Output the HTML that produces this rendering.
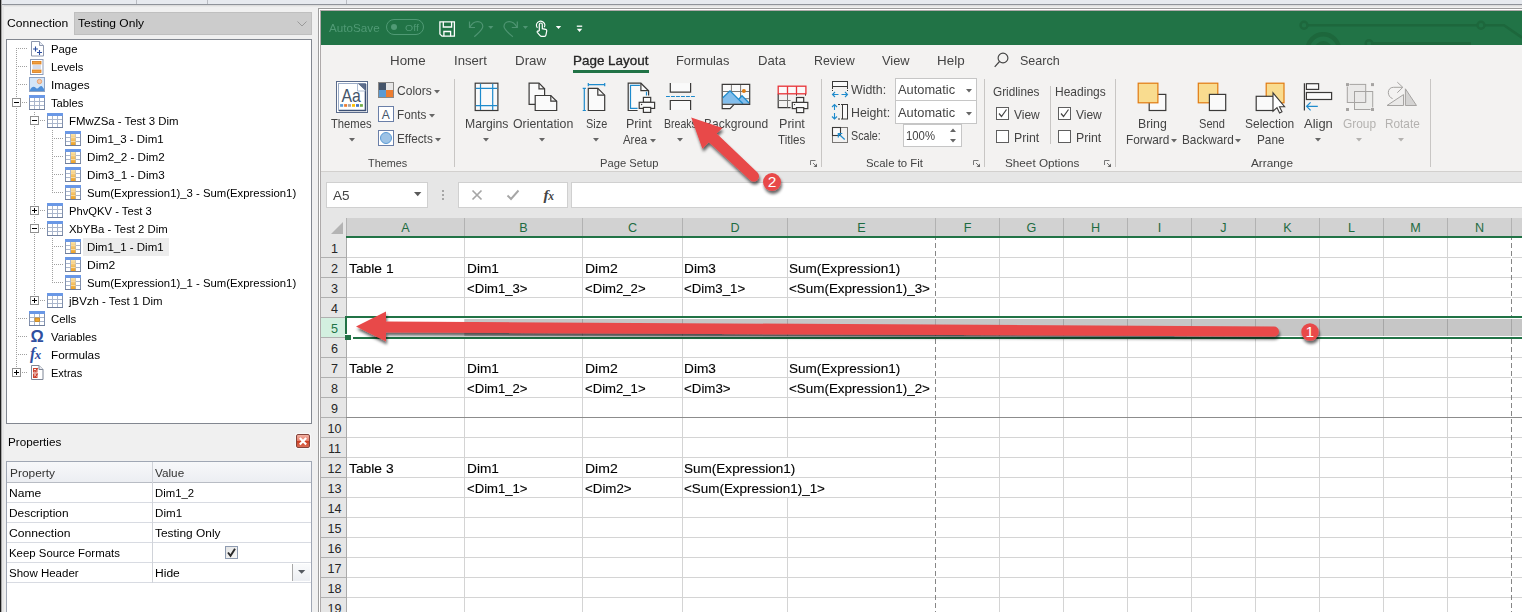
<!DOCTYPE html>
<html><head><meta charset="utf-8"><title>Excel Page Layout</title>
<style>
*{box-sizing:border-box;margin:0;padding:0}
html,body{width:1522px;height:612px;overflow:hidden;background:#f0f0f0}
body{position:relative;font-family:"Liberation Sans",sans-serif;font-size:12px;color:#000}
.a{position:absolute}
.t{position:absolute;white-space:nowrap;line-height:1}
.ui{font-size:12px;letter-spacing:-0.19px;color:#000}
.rb{font-size:12.2px;color:#444;letter-spacing:-0.15px}
.cell{font-size:13.2px;color:#000;letter-spacing:-0.2px}
.hd{font-size:12.6px;color:#1e6b41;text-align:center}
.rn{font-size:12.6px;color:#262626;text-align:center;width:24px}
svg{position:absolute;overflow:visible}
</style></head><body>

<div class="a" style="left:0;top:0;width:1522px;height:4px;background:#e7eaef"></div>
<div class="a" style="left:0;top:4px;width:1522px;height:1px;background:#8f939a"></div>
<div class="a" style="left:0;top:5px;width:1522px;height:1px;background:#dcdcdc"></div><div class="a" style="left:0;top:6px;width:1522px;height:1px;background:#e8e8e8"></div>
<div class="a" style="left:136px;top:0;width:1px;height:4px;background:#b9bcc2"></div>
<div class="a" style="left:207px;top:0;width:1px;height:4px;background:#b9bcc2"></div>
<div class="a" style="left:346px;top:0;width:1px;height:4px;background:#b9bcc2"></div>
<div class="a" style="left:0;top:7px;width:318px;height:605px;background:#f0f0f0"></div>
<div class="a" style="left:0;top:0;width:1px;height:612px;background:#1c1c1c"></div><div class="a" style="left:1px;top:0;width:1px;height:612px;background:#a8a8a8"></div><div class="a" style="left:2px;top:5px;width:2px;height:607px;background:#e6e6e6"></div>
<div class="t" style="left:7.4px;top:17.1px;font-size:11.70px;color:#000;transform-origin:0 50%;transform:scaleX(1.037);">Connection</div>
<div class="a" style="left:74px;top:12px;width:238px;height:23px;background:#cccccc;border:1px solid #bfbfbf"></div>
<div class="t" style="left:78.1px;top:17.4px;font-size:11.70px;color:#000;transform-origin:0 50%;transform:scaleX(1.027);">Testing Only</div>
<svg style="left:297px;top:21px" width="10" height="6"><path d="M0.5 0.5 L5 5 L9.5 0.5" fill="none" stroke="#9a9a9a" stroke-width="1"/></svg>
<div class="a" style="left:6px;top:39px;width:306px;height:385px;background:#fff;border:1px solid #828790"></div>
<div class="a" style="left:16px;top:48px;width:1px;height:320px;background:repeating-linear-gradient(180deg,#a0a0a0 0 1px,transparent 1px 2px)"></div>
<div class="a" style="left:34px;top:112px;width:1px;height:184px;background:repeating-linear-gradient(180deg,#a0a0a0 0 1px,transparent 1px 2px)"></div>
<div class="a" style="left:52px;top:130px;width:1px;height:63px;background:repeating-linear-gradient(180deg,#a0a0a0 0 1px,transparent 1px 2px)"></div>
<div class="a" style="left:52px;top:238px;width:1px;height:45px;background:repeating-linear-gradient(180deg,#a0a0a0 0 1px,transparent 1px 2px)"></div>
<svg style="left:29px;top:41px" width="16" height="16"><path d="M2.500 0.500 H10.500 L14.500 4.500 V15 H2.500 Z" fill="#fff" stroke="#8d97ad"/><path d="M10.500 0.500 V4.500 H14.500" fill="#e9edf5" stroke="#8d97ad"/><path d="M6.500 5.500v5M4 8h5M10.500 9v5M8 11.500h5" stroke="#2b4ea0" stroke-width="1.100"/></svg>
<div class="t" style="left:50.9px;top:42.8px;font-size:11.70px;color:#000;transform-origin:0 50%;transform:scaleX(0.970);">Page</div>
<div class="a" style="left:18px;top:48px;width:10px;height:1px;background:repeating-linear-gradient(90deg,#a0a0a0 0 1px,transparent 1px 2px)"></div>
<svg style="left:29px;top:59px" width="16" height="16"><rect x="1.500" y="0.500" width="12.500" height="15" fill="#fff" stroke="#8d9cb8"/><rect x="3.500" y="2.500" width="8.500" height="2.500" fill="#f0a040" stroke="#d97a1a" stroke-width="0.800"/><rect x="3.500" y="11" width="8.500" height="2.500" fill="#f0a040" stroke="#d97a1a" stroke-width="0.800"/><path d="M3.500 7h8.500M3.500 9h8.500" stroke="#a9b9d9" stroke-width="1"/></svg>
<div class="t" style="left:50.9px;top:60.8px;font-size:11.70px;color:#000;transform-origin:0 50%;transform:scaleX(0.961);">Levels</div>
<div class="a" style="left:18px;top:66px;width:10px;height:1px;background:repeating-linear-gradient(90deg,#a0a0a0 0 1px,transparent 1px 2px)"></div>
<svg style="left:29px;top:77px" width="16" height="16"><rect x="0.5" y="0.5" width="15" height="14" fill="#d5e6f8" stroke="#8ea3c4"/><path d="M1 13 C3 9 5 9 7 11 C9 13 10 9 12 9 C13.500 9 14 11 15 12 V14 H1Z" fill="#4f8fd8"/><circle cx="10.500" cy="4.500" r="2.200" fill="#f6c9a8" stroke="#e8955a" stroke-width="0.8"/></svg>
<div class="t" style="left:50.9px;top:78.8px;font-size:11.70px;color:#000;transform-origin:0 50%;transform:scaleX(1.006);">Images</div>
<div class="a" style="left:18px;top:84px;width:10px;height:1px;background:repeating-linear-gradient(90deg,#a0a0a0 0 1px,transparent 1px 2px)"></div>
<svg style="left:29px;top:95px" width="16" height="16"><rect x="0.5" y="0.5" width="15" height="14" fill="#fff" stroke="#8291ad"/><rect x="0" y="0" width="16" height="3" fill="#6a98e6"/><path d="M1 6.500h14M1 10.500h14M5.500 3v11M10.500 3v11" stroke="#aab6cc" stroke-width="1"/><path d="M0 14.500h16" stroke="#6f7e9c" stroke-width="1"/></svg>
<div class="t" style="left:50.9px;top:96.8px;font-size:11.70px;color:#000;transform-origin:0 50%;transform:scaleX(0.961);">Tables</div>
<div class="a" style="left:22px;top:102px;width:6px;height:1px;background:repeating-linear-gradient(90deg,#a0a0a0 0 1px,transparent 1px 2px)"></div>
<div class="a" style="left:12px;top:98px;width:9px;height:9px;background:#fff;border:1px solid #919191"></div><div class="a" style="left:14px;top:102px;width:5px;height:1px;background:#000"></div>
<svg style="left:47px;top:113px" width="16" height="16"><rect x="0.5" y="0.5" width="15" height="14" fill="#fff" stroke="#8291ad"/><rect x="0" y="0" width="16" height="3" fill="#6a98e6"/><path d="M1 6.500h14M1 10.500h14M5.500 3v11M10.500 3v11" stroke="#aab6cc" stroke-width="1"/><path d="M0 14.500h16" stroke="#6f7e9c" stroke-width="1"/></svg>
<div class="t" style="left:69.3px;top:114.8px;font-size:11.70px;color:#000;transform-origin:0 50%;transform:scaleX(0.976);">FMwZSa - Test 3 Dim</div>
<div class="a" style="left:40px;top:120px;width:6px;height:1px;background:repeating-linear-gradient(90deg,#a0a0a0 0 1px,transparent 1px 2px)"></div>
<div class="a" style="left:30px;top:116px;width:9px;height:9px;background:#fff;border:1px solid #919191"></div><div class="a" style="left:32px;top:120px;width:5px;height:1px;background:#000"></div>
<svg style="left:65px;top:131px" width="16" height="16"><rect x="0.5" y="0.5" width="15" height="14" fill="#fff" stroke="#8291ad"/><rect x="0" y="0" width="16" height="3" fill="#6a98e6"/><path d="M1 6.500h14M1 10.500h14M5.500 3v11M10.500 3v11" stroke="#aab6cc" stroke-width="1"/><path d="M0 14.500h16" stroke="#6f7e9c" stroke-width="1"/><defs><linearGradient id="og" x1="0" y1="0" x2="0" y2="1"><stop offset="0" stop-color="#fbe3a8"/><stop offset="1" stop-color="#eda024"/></linearGradient></defs><rect x="6" y="3" width="4.500" height="11" fill="url(#og)"/><path d="M6 6.500h4.500M6 10.500h4.500" stroke="#f6d9a0" stroke-width="1"/></svg>
<div class="t" style="left:87.2px;top:132.8px;font-size:11.70px;color:#000;transform-origin:0 50%;transform:scaleX(0.983);">Dim1_3 - Dim1</div>
<div class="a" style="left:54px;top:138px;width:10px;height:1px;background:repeating-linear-gradient(90deg,#a0a0a0 0 1px,transparent 1px 2px)"></div>
<svg style="left:65px;top:149px" width="16" height="16"><rect x="0.5" y="0.5" width="15" height="14" fill="#fff" stroke="#8291ad"/><rect x="0" y="0" width="16" height="3" fill="#6a98e6"/><path d="M1 6.500h14M1 10.500h14M5.500 3v11M10.500 3v11" stroke="#aab6cc" stroke-width="1"/><path d="M0 14.500h16" stroke="#6f7e9c" stroke-width="1"/><defs><linearGradient id="og" x1="0" y1="0" x2="0" y2="1"><stop offset="0" stop-color="#fbe3a8"/><stop offset="1" stop-color="#eda024"/></linearGradient></defs><rect x="6" y="3" width="4.500" height="11" fill="url(#og)"/><path d="M6 6.500h4.500M6 10.500h4.500" stroke="#f6d9a0" stroke-width="1"/></svg>
<div class="t" style="left:87.2px;top:150.8px;font-size:11.70px;color:#000;transform-origin:0 50%;transform:scaleX(0.997);">Dim2_2 - Dim2</div>
<div class="a" style="left:54px;top:156px;width:10px;height:1px;background:repeating-linear-gradient(90deg,#a0a0a0 0 1px,transparent 1px 2px)"></div>
<svg style="left:65px;top:167px" width="16" height="16"><rect x="0.5" y="0.5" width="15" height="14" fill="#fff" stroke="#8291ad"/><rect x="0" y="0" width="16" height="3" fill="#6a98e6"/><path d="M1 6.500h14M1 10.500h14M5.500 3v11M10.500 3v11" stroke="#aab6cc" stroke-width="1"/><path d="M0 14.500h16" stroke="#6f7e9c" stroke-width="1"/><defs><linearGradient id="og" x1="0" y1="0" x2="0" y2="1"><stop offset="0" stop-color="#fbe3a8"/><stop offset="1" stop-color="#eda024"/></linearGradient></defs><rect x="6" y="3" width="4.500" height="11" fill="url(#og)"/><path d="M6 6.500h4.500M6 10.500h4.500" stroke="#f6d9a0" stroke-width="1"/></svg>
<div class="t" style="left:87.2px;top:168.8px;font-size:11.70px;color:#000;transform-origin:0 50%;transform:scaleX(0.997);">Dim3_1 - Dim3</div>
<div class="a" style="left:54px;top:174px;width:10px;height:1px;background:repeating-linear-gradient(90deg,#a0a0a0 0 1px,transparent 1px 2px)"></div>
<svg style="left:65px;top:185px" width="16" height="16"><rect x="0.5" y="0.5" width="15" height="14" fill="#fff" stroke="#8291ad"/><rect x="0" y="0" width="16" height="3" fill="#6a98e6"/><path d="M1 6.500h14M1 10.500h14M5.500 3v11M10.500 3v11" stroke="#aab6cc" stroke-width="1"/><path d="M0 14.500h16" stroke="#6f7e9c" stroke-width="1"/><defs><linearGradient id="og" x1="0" y1="0" x2="0" y2="1"><stop offset="0" stop-color="#fbe3a8"/><stop offset="1" stop-color="#eda024"/></linearGradient></defs><rect x="6" y="3" width="4.500" height="11" fill="url(#og)"/><path d="M6 6.500h4.500M6 10.500h4.500" stroke="#f6d9a0" stroke-width="1"/></svg>
<div class="t" style="left:87.2px;top:186.8px;font-size:11.70px;color:#000;transform-origin:0 50%;transform:scaleX(0.970);">Sum(Expression1)_3 - Sum(Expression1)</div>
<div class="a" style="left:54px;top:192px;width:10px;height:1px;background:repeating-linear-gradient(90deg,#a0a0a0 0 1px,transparent 1px 2px)"></div>
<svg style="left:47px;top:203px" width="16" height="16"><rect x="0.5" y="0.5" width="15" height="14" fill="#fff" stroke="#8291ad"/><rect x="0" y="0" width="16" height="3" fill="#6a98e6"/><path d="M1 6.500h14M1 10.500h14M5.500 3v11M10.500 3v11" stroke="#aab6cc" stroke-width="1"/><path d="M0 14.500h16" stroke="#6f7e9c" stroke-width="1"/></svg>
<div class="t" style="left:69.3px;top:204.8px;font-size:11.70px;color:#000;transform-origin:0 50%;transform:scaleX(0.960);">PhvQKV - Test 3</div>
<div class="a" style="left:40px;top:210px;width:6px;height:1px;background:repeating-linear-gradient(90deg,#a0a0a0 0 1px,transparent 1px 2px)"></div>
<div class="a" style="left:30px;top:206px;width:9px;height:9px;background:#fff;border:1px solid #919191"></div><div class="a" style="left:32px;top:210px;width:5px;height:1px;background:#000"></div><div class="a" style="left:34px;top:208px;width:1px;height:5px;background:#000"></div>
<svg style="left:47px;top:221px" width="16" height="16"><rect x="0.5" y="0.5" width="15" height="14" fill="#fff" stroke="#8291ad"/><rect x="0" y="0" width="16" height="3" fill="#6a98e6"/><path d="M1 6.500h14M1 10.500h14M5.500 3v11M10.500 3v11" stroke="#aab6cc" stroke-width="1"/><path d="M0 14.500h16" stroke="#6f7e9c" stroke-width="1"/></svg>
<div class="t" style="left:69.0px;top:222.8px;font-size:11.70px;color:#000;transform-origin:0 50%;transform:scaleX(0.970);">XbYBa - Test 2 Dim</div>
<div class="a" style="left:40px;top:228px;width:6px;height:1px;background:repeating-linear-gradient(90deg,#a0a0a0 0 1px,transparent 1px 2px)"></div>
<div class="a" style="left:30px;top:224px;width:9px;height:9px;background:#fff;border:1px solid #919191"></div><div class="a" style="left:32px;top:228px;width:5px;height:1px;background:#000"></div>
<div class="a" style="left:83px;top:238px;width:86px;height:18px;background:#ececec"></div>
<svg style="left:65px;top:239px" width="16" height="16"><rect x="0.5" y="0.5" width="15" height="14" fill="#fff" stroke="#8291ad"/><rect x="0" y="0" width="16" height="3" fill="#6a98e6"/><path d="M1 6.500h14M1 10.500h14M5.500 3v11M10.500 3v11" stroke="#aab6cc" stroke-width="1"/><path d="M0 14.500h16" stroke="#6f7e9c" stroke-width="1"/><defs><linearGradient id="og" x1="0" y1="0" x2="0" y2="1"><stop offset="0" stop-color="#fbe3a8"/><stop offset="1" stop-color="#eda024"/></linearGradient></defs><rect x="6" y="3" width="4.500" height="11" fill="url(#og)"/><path d="M6 6.500h4.500M6 10.500h4.500" stroke="#f6d9a0" stroke-width="1"/></svg>
<div class="t" style="left:87.2px;top:240.8px;font-size:11.70px;color:#000;transform-origin:0 50%;transform:scaleX(0.983);">Dim1_1 - Dim1</div>
<div class="a" style="left:54px;top:246px;width:10px;height:1px;background:repeating-linear-gradient(90deg,#a0a0a0 0 1px,transparent 1px 2px)"></div>
<svg style="left:65px;top:257px" width="16" height="16"><rect x="0.5" y="0.5" width="15" height="14" fill="#fff" stroke="#8291ad"/><rect x="0" y="0" width="16" height="3" fill="#6a98e6"/><path d="M1 6.500h14M1 10.500h14M5.500 3v11M10.500 3v11" stroke="#aab6cc" stroke-width="1"/><path d="M0 14.500h16" stroke="#6f7e9c" stroke-width="1"/><defs><linearGradient id="og" x1="0" y1="0" x2="0" y2="1"><stop offset="0" stop-color="#fbe3a8"/><stop offset="1" stop-color="#eda024"/></linearGradient></defs><rect x="6" y="3" width="4.500" height="11" fill="url(#og)"/><path d="M6 6.500h4.500M6 10.500h4.500" stroke="#f6d9a0" stroke-width="1"/></svg>
<div class="t" style="left:87.2px;top:258.7px;font-size:11.70px;color:#000;transform-origin:0 50%;transform:scaleX(1.037);">Dim2</div>
<div class="a" style="left:54px;top:264px;width:10px;height:1px;background:repeating-linear-gradient(90deg,#a0a0a0 0 1px,transparent 1px 2px)"></div>
<svg style="left:65px;top:275px" width="16" height="16"><rect x="0.5" y="0.5" width="15" height="14" fill="#fff" stroke="#8291ad"/><rect x="0" y="0" width="16" height="3" fill="#6a98e6"/><path d="M1 6.500h14M1 10.500h14M5.500 3v11M10.500 3v11" stroke="#aab6cc" stroke-width="1"/><path d="M0 14.500h16" stroke="#6f7e9c" stroke-width="1"/><defs><linearGradient id="og" x1="0" y1="0" x2="0" y2="1"><stop offset="0" stop-color="#fbe3a8"/><stop offset="1" stop-color="#eda024"/></linearGradient></defs><rect x="6" y="3" width="4.500" height="11" fill="url(#og)"/><path d="M6 6.500h4.500M6 10.500h4.500" stroke="#f6d9a0" stroke-width="1"/></svg>
<div class="t" style="left:87.2px;top:276.7px;font-size:11.70px;color:#000;transform-origin:0 50%;transform:scaleX(0.970);">Sum(Expression1)_1 - Sum(Expression1)</div>
<div class="a" style="left:54px;top:282px;width:10px;height:1px;background:repeating-linear-gradient(90deg,#a0a0a0 0 1px,transparent 1px 2px)"></div>
<svg style="left:47px;top:293px" width="16" height="16"><rect x="0.5" y="0.5" width="15" height="14" fill="#fff" stroke="#8291ad"/><rect x="0" y="0" width="16" height="3" fill="#6a98e6"/><path d="M1 6.500h14M1 10.500h14M5.500 3v11M10.500 3v11" stroke="#aab6cc" stroke-width="1"/><path d="M0 14.500h16" stroke="#6f7e9c" stroke-width="1"/></svg>
<div class="t" style="left:69.0px;top:294.7px;font-size:11.70px;color:#000;transform-origin:0 50%;transform:scaleX(0.976);">jBVzh - Test 1 Dim</div>
<div class="a" style="left:40px;top:300px;width:6px;height:1px;background:repeating-linear-gradient(90deg,#a0a0a0 0 1px,transparent 1px 2px)"></div>
<div class="a" style="left:30px;top:296px;width:9px;height:9px;background:#fff;border:1px solid #919191"></div><div class="a" style="left:32px;top:300px;width:5px;height:1px;background:#000"></div><div class="a" style="left:34px;top:298px;width:1px;height:5px;background:#000"></div>
<svg style="left:29px;top:311px" width="16" height="16"><rect x="0.5" y="0.5" width="15" height="14" fill="#fff" stroke="#8291ad"/><rect x="0" y="0" width="16" height="3" fill="#6a98e6"/><path d="M1 6.500h14M1 10.500h14M5.500 3v11M10.500 3v11" stroke="#aab6cc" stroke-width="1"/><path d="M0 14.500h16" stroke="#6f7e9c" stroke-width="1"/><rect x="6" y="7" width="4.500" height="3.500" fill="#f0a830" stroke="#c98418" stroke-width="0.8"/></svg>
<div class="t" style="left:51.1px;top:312.7px;font-size:11.70px;color:#000;transform-origin:0 50%;transform:scaleX(0.973);">Cells</div>
<div class="a" style="left:18px;top:318px;width:10px;height:1px;background:repeating-linear-gradient(90deg,#a0a0a0 0 1px,transparent 1px 2px)"></div>
<div class="t" style="left:30.5px;top:328px;font-size:16.500px;color:#2f4fa0;font-weight:bold;font-family:'Liberation Sans',sans-serif">&#937;</div>
<div class="t" style="left:51.1px;top:330.7px;font-size:11.70px;color:#000;transform-origin:0 50%;transform:scaleX(0.960);">Variables</div>
<div class="a" style="left:18px;top:336px;width:10px;height:1px;background:repeating-linear-gradient(90deg,#a0a0a0 0 1px,transparent 1px 2px)"></div>
<div class="t" style="left:30px;top:346px;font-size:16px;color:#2f4fa0;font-style:italic;font-weight:bold;font-family:'Liberation Serif',serif;letter-spacing:-0.5px">f<span style="font-size:13px">x</span></div>
<div class="t" style="left:51.1px;top:348.7px;font-size:11.70px;color:#000;transform-origin:0 50%;transform:scaleX(1.007);">Formulas</div>
<div class="a" style="left:18px;top:354px;width:10px;height:1px;background:repeating-linear-gradient(90deg,#a0a0a0 0 1px,transparent 1px 2px)"></div>
<svg style="left:29px;top:365px" width="16" height="16"><path d="M2.500 0.500 H10 L14 4.500 V14.500 H2.500 Z" fill="#fff" stroke="#7d8595"/><path d="M10 0.500 V4.500 H14" fill="#e8eaf0" stroke="#7d8595"/><rect x="4.500" y="3.500" width="3.500" height="3.500" fill="#fff" stroke="#d1442c"/><rect x="4.500" y="9" width="3.500" height="3.500" fill="#fff" stroke="#d1442c"/><path d="M5 5l1.200 1.300 2.500-3.300M5 10.500l1.200 1.300 2.500-3.300" fill="none" stroke="#c0392b" stroke-width="1.100"/></svg>
<div class="t" style="left:51.1px;top:366.7px;font-size:11.70px;color:#000;transform-origin:0 50%;transform:scaleX(0.941);">Extras</div>
<div class="a" style="left:22px;top:372px;width:6px;height:1px;background:repeating-linear-gradient(90deg,#a0a0a0 0 1px,transparent 1px 2px)"></div>
<div class="a" style="left:12px;top:368px;width:9px;height:9px;background:#fff;border:1px solid #919191"></div><div class="a" style="left:14px;top:372px;width:5px;height:1px;background:#000"></div><div class="a" style="left:16px;top:370px;width:1px;height:5px;background:#000"></div>
<div class="t" style="left:8.0px;top:435.8px;font-size:11.70px;color:#000;transform-origin:0 50%;transform:scaleX(1.001);">Properties</div>
<div class="a" style="left:295px;top:433px;width:16px;height:16px;background:#f8f8f8;border-radius:2px"></div><div class="a" style="left:296px;top:434px;width:14px;height:14px;background:linear-gradient(#f2b0a2 0,#e67c68 50%,#c93a1e 50%,#dc6c54 100%);border:1px solid #84433a;border-radius:2px"></div>
<svg style="left:296px;top:434px" width="14" height="14"><path d="M3.800 4 L10.200 10.500 M10.200 4 L3.800 10.500" stroke="#fff" stroke-width="2.200"/></svg>
<div class="a" style="left:6px;top:461px;width:306px;height:160px;background:#fff;border:1px solid #a0a7b4"></div>
<div class="a" style="left:7px;top:462px;width:304px;height:20px;background:linear-gradient(#f7f8fa,#eceef2)"></div>
<div class="a" style="left:7px;top:482px;width:304px;height:1px;background:#b8bcc4"></div>
<div class="t" style="left:10.1px;top:466.8px;font-size:11.70px;color:#333;transform-origin:0 50%;transform:scaleX(1.018);">Property</div>
<div class="t" style="left:155.2px;top:466.8px;font-size:11.70px;color:#333;transform-origin:0 50%;transform:scaleX(1.005);">Value</div>
<div class="a" style="left:7px;top:502px;width:304px;height:1px;background:#d8dbe2"></div>
<div class="t" style="left:9.1px;top:487.0px;font-size:11.70px;color:#000;transform-origin:0 50%;transform:scaleX(1.035);">Name</div>
<div class="t" style="left:155.2px;top:487.0px;font-size:11.70px;color:#000;transform-origin:0 50%;transform:scaleX(0.970);">Dim1_2</div>
<div class="a" style="left:7px;top:522px;width:304px;height:1px;background:#d8dbe2"></div>
<div class="t" style="left:9.1px;top:507.1px;font-size:11.70px;color:#000;transform-origin:0 50%;transform:scaleX(1.018);">Description</div>
<div class="t" style="left:155.2px;top:507.1px;font-size:11.70px;color:#000;transform-origin:0 50%;transform:scaleX(0.993);">Dim1</div>
<div class="a" style="left:7px;top:542px;width:304px;height:1px;background:#d8dbe2"></div>
<div class="t" style="left:9.1px;top:527.1px;font-size:11.70px;color:#000;transform-origin:0 50%;transform:scaleX(1.039);">Connection</div>
<div class="t" style="left:155.2px;top:527.1px;font-size:11.70px;color:#000;transform-origin:0 50%;transform:scaleX(1.019);">Testing Only</div>
<div class="a" style="left:7px;top:562px;width:304px;height:1px;background:#d8dbe2"></div>
<div class="t" style="left:9.1px;top:547.1px;font-size:11.70px;color:#000;transform-origin:0 50%;transform:scaleX(0.975);">Keep Source Formats</div>
<div class="a" style="left:7px;top:582px;width:304px;height:1px;background:#d8dbe2"></div>
<div class="t" style="left:9.1px;top:567.1px;font-size:11.70px;color:#000;transform-origin:0 50%;transform:scaleX(0.983);">Show Header</div>
<div class="t" style="left:155.2px;top:567.1px;font-size:11.70px;color:#000;transform-origin:0 50%;transform:scaleX(1.031);">Hide</div>
<div class="a" style="left:152px;top:462px;width:1px;height:121px;background:#d0d3d9"></div>
<div class="a" style="left:225px;top:546px;width:13px;height:13px;background:linear-gradient(135deg,#e4e4e4,#f8f8f8);border:1px solid #8e9bb0"></div>
<svg style="left:225px;top:546px" width="13" height="13"><path d="M3 6.500 L5.500 9.800 L10 2.800" fill="none" stroke="#2a2a2a" stroke-width="1.900"/></svg>
<div class="a" style="left:293px;top:564px;width:17px;height:17px;background:linear-gradient(#fafbfc,#eceef2)"></div><div class="a" style="left:292px;top:564px;width:1px;height:17px;background:#a8a8a8"></div>
<svg style="left:298px;top:570px" width="8" height="5"><path d="M0 0 H7.300 L3.650 3.800 Z" fill="#555a60"/></svg><div class="a" style="left:318px;top:8px;width:1204px;height:604px;background:#9d9d9d"></div><div class="a" style="left:319px;top:9px;width:1203px;height:603px;background:#fff"></div>
<div class="a" style="left:320px;top:10px;width:1202px;height:602px;background:#aeaaaa"></div>
<div class="a" style="left:321px;top:11px;width:1201px;height:34px;background:#217346"></div>
<div class="a" style="left:321px;top:45px;width:1201px;height:126px;background:#f3f2f1"></div>
<div class="a" style="left:321px;top:171px;width:1201px;height:1px;background:#d2d0ce"></div>
<div class="a" style="left:321px;top:172px;width:1201px;height:46px;background:#e6e6e6"></div>
<div class="a" style="left:321px;top:218px;width:1201px;height:394px;background:#fff"></div>
<svg style="left:1290px;top:11px;overflow:hidden" width="232" height="34" viewBox="0 0 232 34"><g fill="none" stroke="#1d673c" stroke-width="2.6"><path d="M14 14.200 H214 L232 26.600"/><circle cx="14" cy="14.200" r="3.500" fill="#217346" stroke-width="2.400"/><circle cx="191" cy="14.200" r="3.500" fill="#217346" stroke-width="2.400"/><circle cx="33.300" cy="39" r="15.800" stroke-width="4.400"/><circle cx="33.300" cy="39" r="9" fill="#1d673c" stroke="none"/><path d="M79 32.500 H181" stroke-width="3"/><circle cx="79" cy="32.500" r="3.300" fill="#217346" stroke-width="2.400"/></g></svg>
<div class="t" style="left:328.8px;top:22.5px;font-size:11.20px;color:#509a75;transform-origin:0 50%;transform:scaleX(1.044);">AutoSave</div>
<div class="a" style="left:386px;top:19px;width:38px;height:16px;border:1px solid #509a75;border-radius:8px"></div>
<div class="a" style="left:391px;top:24px;width:6.400px;height:6.400px;border-radius:3.200px;background:#509a75"></div>
<div class="t" style="left:404.7px;top:23.0px;font-size:9.80px;color:#509a75;transform-origin:0 50%;transform:scaleX(1.071);">Off</div>
<svg style="left:0;top:0" width="600" height="45" viewBox="0 0 600 45"><path d="M439.900 21.800 H454.400 V36.200 H442 L439.900 34.100 Z" fill="none" stroke="#fff" stroke-width="1.300"/><path d="M443.300 21.800 V27 H451.600 V21.800 M443.900 36.200 V31.500 H450.600 V36.200" fill="none" stroke="#fff" stroke-width="1.300"/><path d="M469.500 21.500 V27.500 H475" fill="none" stroke="#4f9573" stroke-width="1.200"/><path d="M469.800 27.300 C472 23 475 21.600 477.600 21.600 C481 21.600 482.800 24 482.800 26.500 C482.800 29.500 480 31.500 474.300 36.800" fill="none" stroke="#4f9573" stroke-width="1.200"/><path d="M488.200 26 h5.200 l-2.600 3 z" fill="#4f9573"/><path d="M517.300 21.500 V27.500 H511.800" fill="none" stroke="#4f9573" stroke-width="1.200"/><path d="M517 27.300 C514.800 23 511.800 21.600 509.200 21.600 C505.800 21.600 504 24 504 26.500 C504 29.500 506.800 31.500 512.800 36.800" fill="none" stroke="#4f9573" stroke-width="1.200"/><path d="M522.800 26 h5.200 l-2.600 3 z" fill="#4f9573"/><path d="M539.300 30.500 V24.500 a1.500 1.500 0 0 1 3 0 V28.700 l3.300 0.700 c0.900 0.200 1.300 0.800 1.100 1.700 l-0.800 4.100 c-0.150 0.700 -0.600 1.100 -1.400 1.100 H541.500 c-0.600 0 -1 -0.200 -1.400 -0.700 L537.300 32.300 c-0.600 -0.900 0.500 -1.900 1.300 -1.200 Z" fill="none" stroke="#fff" stroke-width="1.200"/><path d="M537.400 27.800 a4.100 4.100 0 1 1 6.900 -0.600" fill="none" stroke="#fff" stroke-width="1.100"/><path d="M555.800 26 h5.400 l-2.700 3.100 z" fill="#fff"/><path d="M576.800 26.200 h5.400" stroke="#fff" stroke-width="1.300"/><path d="M576.800 28.800 h5.400 l-2.700 3.200 z" fill="#fff"/></svg>
<div class="t" style="left:389.9px;top:54.9px;font-size:12.60px;color:#444;transform-origin:0 50%;transform:scaleX(1.062);">Home</div>
<div class="t" style="left:453.9px;top:54.9px;font-size:12.60px;color:#444;transform-origin:0 50%;transform:scaleX(1.044);">Insert</div>
<div class="t" style="left:514.9px;top:54.9px;font-size:12.60px;color:#444;transform-origin:0 50%;transform:scaleX(1.061);">Draw</div>
<div class="t" style="left:573.1px;top:54.9px;font-size:12.60px;color:#262626;transform-origin:0 50%;transform:scaleX(1.067);-webkit-text-stroke:0.3px #262626;">Page Layout</div>
<div class="t" style="left:675.6px;top:54.9px;font-size:12.60px;color:#444;transform-origin:0 50%;transform:scaleX(1.017);">Formulas</div>
<div class="t" style="left:757.6px;top:54.9px;font-size:12.60px;color:#444;transform-origin:0 50%;transform:scaleX(1.041);">Data</div>
<div class="t" style="left:813.8px;top:54.9px;font-size:12.60px;color:#444;transform-origin:0 50%;transform:scaleX(0.985);">Review</div>
<div class="t" style="left:881.7px;top:54.9px;font-size:12.60px;color:#444;transform-origin:0 50%;transform:scaleX(1.019);">View</div>
<div class="t" style="left:936.6px;top:54.9px;font-size:12.60px;color:#444;transform-origin:0 50%;transform:scaleX(1.065);">Help</div>
<div class="t" style="left:1019.6px;top:54.9px;font-size:12.60px;color:#444;transform-origin:0 50%;transform:scaleX(0.994);">Search</div>
<div class="a" style="left:573px;top:70px;width:76px;height:3px;background:#217346"></div>
<svg style="left:992.500px;top:52.400px" width="16" height="16"><circle cx="10" cy="6" r="4.900" fill="none" stroke="#444" stroke-width="1.150"/><path d="M6.500 9.500 L1.700 14.800" stroke="#444" stroke-width="1.250"/></svg>
<div class="t" style="left:331.4px;top:118.8px;font-size:11.90px;color:#444;transform-origin:0 50%;transform:scaleX(0.944);">Themes</div>
<svg style="left:349px;top:137.5px" width="6" height="4"><path d="M0 0h6l-3 3.5z" fill="#666"/></svg>
<div class="t" style="left:396.6px;top:85.8px;font-size:11.90px;color:#444;transform-origin:0 50%;transform:scaleX(1.012);">Colors</div>
<svg style="left:434px;top:89.5px" width="6" height="4"><path d="M0 0h6l-3 3.5z" fill="#666"/></svg>
<div class="t" style="left:396.6px;top:109.8px;font-size:11.90px;color:#444;transform-origin:0 50%;transform:scaleX(0.984);">Fonts</div>
<svg style="left:428.5px;top:113.5px" width="6" height="4"><path d="M0 0h6l-3 3.5z" fill="#666"/></svg>
<div class="t" style="left:396.6px;top:133.8px;font-size:11.90px;color:#444;transform-origin:0 50%;transform:scaleX(0.990);">Effects</div>
<svg style="left:434.5px;top:137.5px" width="6" height="4"><path d="M0 0h6l-3 3.5z" fill="#666"/></svg>
<div class="t" style="left:368.1px;top:158.0px;font-size:11.30px;color:#444;transform-origin:0 50%;transform:scaleX(0.963);">Themes</div>
<div class="a" style="left:454px;top:79px;width:1px;height:88px;background:#c8c6c4"></div>
<div class="t" style="left:464.9px;top:118.8px;font-size:11.90px;color:#444;transform-origin:0 50%;transform:scaleX(1.028);">Margins</div>
<svg style="left:483px;top:137.5px" width="6" height="4"><path d="M0 0h6l-3 3.5z" fill="#666"/></svg>
<div class="t" style="left:513.1px;top:118.8px;font-size:11.90px;color:#444;transform-origin:0 50%;transform:scaleX(1.036);">Orientation</div>
<svg style="left:539px;top:137.5px" width="6" height="4"><path d="M0 0h6l-3 3.5z" fill="#666"/></svg>
<div class="t" style="left:586.4px;top:118.8px;font-size:11.90px;color:#444;transform-origin:0 50%;transform:scaleX(0.916);">Size</div>
<svg style="left:593px;top:137.5px" width="6" height="4"><path d="M0 0h6l-3 3.5z" fill="#666"/></svg>
<div class="t" style="left:625.6px;top:118.8px;font-size:11.90px;color:#444;transform-origin:0 50%;transform:scaleX(1.054);">Print</div>
<div class="t" style="left:622.9px;top:134.8px;font-size:11.90px;color:#444;transform-origin:0 50%;transform:scaleX(0.959);">Area</div>
<svg style="left:649.5px;top:138.5px" width="6" height="4"><path d="M0 0h6l-3 3.5z" fill="#666"/></svg>
<div class="t" style="left:664.3px;top:118.8px;font-size:11.90px;color:#444;transform-origin:0 50%;transform:scaleX(0.888);">Breaks</div>
<svg style="left:677px;top:137.5px" width="6" height="4"><path d="M0 0h6l-3 3.5z" fill="#666"/></svg>
<div class="t" style="left:704.1px;top:118.8px;font-size:11.90px;color:#444;transform-origin:0 50%;transform:scaleX(1.012);">Background</div>
<div class="t" style="left:778.8px;top:118.8px;font-size:11.90px;color:#444;transform-origin:0 50%;transform:scaleX(1.058);">Print</div>
<div class="t" style="left:778.4px;top:134.8px;font-size:11.90px;color:#444;transform-origin:0 50%;transform:scaleX(0.972);">Titles</div>
<div class="t" style="left:599.6px;top:158.0px;font-size:11.30px;color:#444;transform-origin:0 50%;transform:scaleX(0.990);">Page Setup</div>
<svg style="left:810px;top:160px" width="8" height="8"><path d="M0.5 5 V0.5 H5.500" fill="none" stroke="#777"/><path d="M3 3 L6 6" stroke="#777"/><path d="M7 3.500 V7 H3.500 Z" fill="#666"/></svg>
<div class="a" style="left:821px;top:79px;width:1px;height:88px;background:#c8c6c4"></div>
<div class="t" style="left:850.9px;top:84.8px;font-size:11.90px;color:#444;transform-origin:0 50%;transform:scaleX(1.041);">Width:</div>
<div class="t" style="left:850.9px;top:107.8px;font-size:11.90px;color:#444;transform-origin:0 50%;transform:scaleX(1.037);">Height:</div>
<div class="t" style="left:850.9px;top:130.8px;font-size:11.90px;color:#444;transform-origin:0 50%;transform:scaleX(0.901);">Scale:</div>
<div class="a" style="left:895px;top:78px;width:82px;height:23px;background:#fff;border:1px solid #c6c6c6"></div>
<div class="a" style="left:895px;top:100px;width:82px;height:24px;background:#fff;border:1px solid #c6c6c6"></div>
<div class="a" style="left:903px;top:124px;width:59px;height:23px;background:#fff;border:1px solid #c6c6c6"></div>
<div class="t" style="left:897.6px;top:84.8px;font-size:11.90px;color:#444;transform-origin:0 50%;transform:scaleX(1.079);">Automatic</div>
<svg style="left:966px;top:88.5px" width="6" height="4"><path d="M0 0h6l-3 3.5z" fill="#666"/></svg>
<div class="t" style="left:897.6px;top:107.8px;font-size:11.90px;color:#444;transform-origin:0 50%;transform:scaleX(1.079);">Automatic</div>
<svg style="left:966px;top:111.5px" width="6" height="4"><path d="M0 0h6l-3 3.5z" fill="#666"/></svg>
<div class="t" style="left:905.6px;top:130.8px;font-size:11.90px;color:#444;transform-origin:0 50%;transform:scaleX(0.953);">100%</div>
<svg style="left:950px;top:128px" width="7" height="15"><path d="M0 4h6l-3-3.500z M0 11h6l-3 3.500z" fill="#666"/></svg>
<div class="t" style="left:865.6px;top:158.0px;font-size:11.30px;color:#444;transform-origin:0 50%;transform:scaleX(1.008);">Scale to Fit</div>
<svg style="left:973px;top:160px" width="8" height="8"><path d="M0.5 5 V0.5 H5.500" fill="none" stroke="#777"/><path d="M3 3 L6 6" stroke="#777"/><path d="M7 3.500 V7 H3.500 Z" fill="#666"/></svg>
<div class="a" style="left:984px;top:79px;width:1px;height:88px;background:#c8c6c4"></div>
<div class="t" style="left:992.9px;top:86.8px;font-size:11.90px;color:#444;transform-origin:0 50%;transform:scaleX(0.990);">Gridlines</div>
<div class="t" style="left:1054.6px;top:86.8px;font-size:11.90px;color:#444;transform-origin:0 50%;transform:scaleX(1.010);">Headings</div>
<div class="a" style="left:996px;top:107px;width:13px;height:13px;background:#fff;border:1px solid #5e5e5e"></div><svg style="left:996px;top:107px" width="13" height="13"><path d="M3 6.500 L5.500 9.500 L10.500 2.500" fill="none" stroke="#444" stroke-width="1.2"/></svg>
<div class="t" style="left:1013.6px;top:109.8px;font-size:11.90px;color:#444;transform-origin:0 50%;transform:scaleX(1.009);">View</div>
<div class="a" style="left:996px;top:130px;width:13px;height:13px;background:#fff;border:1px solid #5e5e5e"></div>
<div class="t" style="left:1014.1px;top:132.8px;font-size:11.90px;color:#444;transform-origin:0 50%;transform:scaleX(1.034);">Print</div>
<div class="a" style="left:1058px;top:107px;width:13px;height:13px;background:#fff;border:1px solid #5e5e5e"></div><svg style="left:1058px;top:107px" width="13" height="13"><path d="M3 6.500 L5.500 9.500 L10.500 2.500" fill="none" stroke="#444" stroke-width="1.2"/></svg>
<div class="t" style="left:1075.6px;top:109.8px;font-size:11.90px;color:#444;transform-origin:0 50%;transform:scaleX(1.009);">View</div>
<div class="a" style="left:1058px;top:130px;width:13px;height:13px;background:#fff;border:1px solid #5e5e5e"></div>
<div class="t" style="left:1076.1px;top:132.8px;font-size:11.90px;color:#444;transform-origin:0 50%;transform:scaleX(1.034);">Print</div>
<div class="a" style="left:1050px;top:86px;width:1px;height:58px;background:#c8c6c4"></div>
<div class="t" style="left:1004.6px;top:158.0px;font-size:11.30px;color:#444;transform-origin:0 50%;transform:scaleX(1.038);">Sheet Options</div>
<svg style="left:1104px;top:160px" width="8" height="8"><path d="M0.5 5 V0.5 H5.500" fill="none" stroke="#777"/><path d="M3 3 L6 6" stroke="#777"/><path d="M7 3.500 V7 H3.500 Z" fill="#666"/></svg>
<div class="a" style="left:1115px;top:79px;width:1px;height:88px;background:#c8c6c4"></div>
<div class="t" style="left:1137.8px;top:118.8px;font-size:11.90px;color:#444;transform-origin:0 50%;transform:scaleX(1.037);">Bring</div>
<div class="t" style="left:1125.8px;top:134.8px;font-size:11.90px;color:#444;transform-origin:0 50%;transform:scaleX(0.994);">Forward</div>
<svg style="left:1171px;top:138.5px" width="6" height="4"><path d="M0 0h6l-3 3.5z" fill="#666"/></svg>
<div class="t" style="left:1198.9px;top:118.8px;font-size:11.90px;color:#444;transform-origin:0 50%;transform:scaleX(0.932);">Send</div>
<div class="t" style="left:1181.6px;top:134.8px;font-size:11.90px;color:#444;transform-origin:0 50%;transform:scaleX(0.991);">Backward</div>
<svg style="left:1235px;top:138.5px" width="6" height="4"><path d="M0 0h6l-3 3.5z" fill="#666"/></svg>
<div class="t" style="left:1245.1px;top:118.8px;font-size:11.90px;color:#444;transform-origin:0 50%;transform:scaleX(1.007);">Selection</div>
<div class="t" style="left:1256.6px;top:134.8px;font-size:11.90px;color:#444;transform-origin:0 50%;transform:scaleX(0.989);">Pane</div>
<div class="t" style="left:1303.6px;top:118.8px;font-size:11.90px;color:#444;transform-origin:0 50%;transform:scaleX(1.088);">Align</div>
<svg style="left:1315px;top:137.5px" width="6" height="4"><path d="M0 0h6l-3 3.5z" fill="#666"/></svg>
<div class="t" style="left:1343.0px;top:118.8px;font-size:11.90px;color:#b4b2b0;transform-origin:0 50%;transform:scaleX(1.001);">Group</div>
<svg style="left:1356px;top:137.5px" width="6" height="4"><path d="M0 0h6l-3 3.5z" fill="#b4b2b0"/></svg>
<div class="t" style="left:1384.8px;top:118.8px;font-size:11.90px;color:#b4b2b0;transform-origin:0 50%;transform:scaleX(0.993);">Rotate</div>
<svg style="left:1398px;top:137.5px" width="6" height="4"><path d="M0 0h6l-3 3.5z" fill="#b4b2b0"/></svg>
<div class="t" style="left:1251.4px;top:158.0px;font-size:11.30px;color:#444;transform-origin:0 50%;transform:scaleX(1.045);">Arrange</div>
<div class="a" style="left:1430px;top:79px;width:1px;height:88px;background:#c8c6c4"></div>
<svg style="left:0;top:0" width="1522" height="172" viewBox="0 0 1522 172"><rect x="336.500" y="81.500" width="31" height="31" fill="#fff" stroke="#5a6b8c" stroke-width="1"/><rect x="338.500" y="83.500" width="27" height="27" fill="#fff" stroke="#9aabc6" stroke-width="1"/><path d="M339 110.500 H365.500 V84" fill="none" stroke="#3c5074" stroke-width="1.6"/><path d="M357.500 83.500 H365.500 V91 Z" fill="#5d6d8b"/><path d="M357.500 83.500 V91 H365.500" fill="#fff" stroke="#9aabc6" stroke-width="0.8"/><text x="341.500" y="101.800" font-family="Liberation Sans, sans-serif" font-size="17.700" fill="#44546a" textLength="19.300" lengthAdjust="spacingAndGlyphs">Aa</text><rect x="340.1" y="104.100" width="3" height="2.700" fill="#5b9bd5"/><rect x="344.1" y="104.100" width="3" height="2.700" fill="#ed7d31"/><rect x="348" y="104.100" width="3" height="2.700" fill="#a5a5a5"/><rect x="352" y="104.100" width="3" height="2.700" fill="#ffc000"/><rect x="356" y="104.100" width="3" height="2.700" fill="#4472c4"/><rect x="359.9" y="104.100" width="3" height="2.700" fill="#70ad47"/><rect x="378.500" y="82.500" width="15" height="15" fill="#fff" stroke="#8a8886"/><rect x="379" y="83" width="7" height="7" fill="#44546a"/><rect x="386" y="83" width="7" height="7" fill="#e7e6e6"/><rect x="379" y="90" width="7" height="7" fill="#5b9bd5"/><rect x="386" y="90" width="7" height="7" fill="#ed7d31"/><rect x="378.500" y="106.500" width="15" height="15" fill="#fff" stroke="#6a7fa8"/><text x="381.800" y="118.600" font-family="Liberation Sans, sans-serif" font-size="12" fill="#44546a">A</text><rect x="378.500" y="130.500" width="15" height="15" fill="#fff" stroke="#6a7fa8"/><circle cx="386" cy="138" r="5.500" fill="#9dc3e6" stroke="#5b9bd5"/><rect x="475.200" y="83.200" width="22.700" height="27.300" fill="#fafafa" stroke="#3b3a39" stroke-width="1.2"/><path d="M480.500 83.800 V110 M492.700 83.800 V110 M475.800 88.300 H497.300 M475.800 105.600 H497.300" stroke="#1e8bcd" stroke-width="1.2"/><path d="M529.100 83.200 H539 L544.600 88.800 V104.400 H529.100 Z" fill="#fafafa" stroke="#3b3a39" stroke-width="1.2"/><path d="M539 83.200 V88.800 H544.600" fill="none" stroke="#3b3a39" stroke-width="1.2"/><path d="M535.200 95.500 H550.800 L556.700 101.200 V110.500 H535.200 Z" fill="#fafafa" stroke="#3b3a39" stroke-width="1.2"/><path d="M550.800 95.500 V101.200 H556.700" fill="none" stroke="#3b3a39" stroke-width="1.2"/><path d="M588.300 88.300 H597.800 L604.700 95.200 V110.500 H588.300 Z" fill="#fafafa" stroke="#3b3a39" stroke-width="1.2"/><path d="M597.800 88.300 V95.200 H604.700" fill="none" stroke="#3b3a39" stroke-width="1.2"/><path d="M588.300 84.600 H604.700 M588.300 83 V86.200 M604.700 83 V86.200 M584.300 88.300 V110.500 M582.700 88.300 H585.900 M582.700 110.500 H585.900" stroke="#1e8bcd" stroke-width="1.2"/><path d="M637.600 110.500 H628.200 V83.200 H640.900 L648.600 90.700 V95.600" fill="#fafafa" stroke="#3b3a39" stroke-width="1.2"/><path d="M640.900 83.200 V90.700 H648.600" fill="none" stroke="#3b3a39" stroke-width="1.2"/><path d="M639.900 85.300 H630.500 V108.400 H637.600 M646.500 91.700 V95.600" fill="none" stroke="#1e8bcd" stroke-width="1.2"/><rect x="643.400" y="97.400" width="7.300" height="5" fill="#fafafa" stroke="#3b3a39" stroke-width="1.2"/><rect x="639.200" y="102.300" width="15.400" height="6.100" fill="#fafafa" stroke="#3b3a39" stroke-width="1.2"/><rect x="643.400" y="107.400" width="7.300" height="5" fill="#fafafa" stroke="#3b3a39" stroke-width="1.2"/><circle cx="641.600" cy="104.500" r="0.700" fill="#3b3a39"/><path d="M670.300 83.100 V92.200 H690.600 V83.100" fill="#fafafa" stroke="#3b3a39" stroke-width="1.2"/><path d="M670.300 109.900 V100.500 H690.600 V109.900" fill="#fafafa" stroke="#3b3a39" stroke-width="1.2"/><path d="M666 96.500 H695" stroke="#1e8bcd" stroke-width="1.2" stroke-dasharray="3.900 1.100"/><path d="M722.200 84.400 H749.700 V104.300 H734.100 L730.100 108.600 H722.200 Z" fill="#fafafa" stroke="#3b3a39" stroke-width="1.2"/><path d="M731.400 85 V98 M740.600 85 V98 M722.800 91.500 H749 M744 98.700 H749" stroke="#797775" stroke-width="1"/><path d="M722.800 97.700 L730 90.800 L743 103.700 H722.800 Z" fill="#83beec"/><path d="M739 99 L742 95.700 L749.100 103 V103.700 H743 Z" fill="#83beec"/><path d="M722.800 97.700 L730 90.800 L743 103.700 M739 99 L742 95.700 L749.100 103" fill="none" stroke="#1e8bcd" stroke-width="1.300"/><path d="M722.200 104.300 H749.700" stroke="#3b3a39" stroke-width="1.2"/><circle cx="743.900" cy="90.900" r="2" fill="#e07a10"/><path d="M778.200 93.800 V107.600 H790.600" fill="none" stroke="#3b3a39" stroke-width="1.2"/><path d="M778.200 100.500 H790.600 M787.500 93.800 V107.600" stroke="#797775" stroke-width="1"/><path d="M796.500 93.800 V95.700 M805.500 93.800 V95.700" stroke="#3b3a39" stroke-width="1"/><rect x="778.200" y="86.200" width="27.700" height="7.600" fill="#fafafa" stroke="#e83338" stroke-width="1.300"/><path d="M787.500 86.200 V93.800 M796.500 86.200 V93.800" stroke="#e83338" stroke-width="1.300"/><rect x="796.500" y="97.500" width="7.200" height="5" fill="#fafafa" stroke="#3b3a39" stroke-width="1.2"/><rect x="792.300" y="102.400" width="15.500" height="6.200" fill="#fafafa" stroke="#3b3a39" stroke-width="1.2"/><rect x="796.500" y="107.600" width="7.200" height="5" fill="#fafafa" stroke="#3b3a39" stroke-width="1.2"/><circle cx="794.500" cy="104.600" r="0.700" fill="#3b3a39"/><rect x="832.500" y="81.500" width="15" height="5" fill="#fafafa" stroke="#3b3a39" stroke-width="1"/><path d="M832.500 87 V91 M847.500 87 V91" stroke="#3b3a39" stroke-width="1" stroke-dasharray="2 1"/><path d="M832.500 94.500 H838.500 M835 92 L832.500 94.500 L835 97 M841.500 94.500 H847.500 M845 92 L847.500 94.500 L845 97" fill="none" stroke="#1e8bcd" stroke-width="1.100"/><rect x="842.500" y="104.500" width="5" height="14.500" fill="#fafafa" stroke="#3b3a39" stroke-width="1"/><path d="M838 104.500 H842 M838 119 H842" stroke="#3b3a39" stroke-width="1" stroke-dasharray="2 1"/><path d="M834.500 104.500 V110 M832 107 L834.500 104.500 L837 107 M834.500 113 V119 M832 116.500 L834.500 119 L837 116.500" fill="none" stroke="#1e8bcd" stroke-width="1.100"/><rect x="832.500" y="127.500" width="15" height="15" fill="none" stroke="#797775" stroke-width="1"/><rect x="832.500" y="127.500" width="8" height="8" fill="#fafafa" stroke="#3b3a39" stroke-width="1.100"/><path d="M844.700 139.500 L838.300 133.500 M838.300 137.500 V133.500 H842.300" fill="none" stroke="#1e8bcd" stroke-width="1.200"/><rect x="1149.200" y="94.400" width="16.600" height="16.100" fill="#fafafa" stroke="#3b3a39" stroke-width="1.2"/><rect x="1138.200" y="83.200" width="19.700" height="19.600" fill="#f9dc8f" stroke="#e07a10" stroke-width="1.2"/><rect x="1198.300" y="83.200" width="19.500" height="19.600" fill="#f9dc8f" stroke="#e07a10" stroke-width="1.2"/><rect x="1209.400" y="94.400" width="16.300" height="16.100" fill="#fafafa" stroke="#3b3a39" stroke-width="1.2"/><rect x="1266.200" y="83.200" width="17.800" height="19.600" fill="#f9dc8f" stroke="#e07a10" stroke-width="1.2"/><rect x="1256.200" y="96.300" width="17.300" height="14.200" fill="#fafafa" stroke="#3b3a39" stroke-width="1.2"/><path d="M1273 92.800 V111.200 L1277 107.700 L1279.600 113 L1282 111.800 L1279.500 106.700 H1284.600 Z" fill="#fff" stroke="#3b3a39" stroke-width="1.100"/><path d="M1304.400 83.300 V110.600" stroke="#3b3a39" stroke-width="1.2"/><rect x="1306.400" y="83.700" width="12.200" height="5.700" fill="#fafafa" stroke="#3b3a39" stroke-width="1.2"/><rect x="1306.400" y="92.500" width="25.200" height="7" fill="#fafafa" stroke="#3b3a39" stroke-width="1.2"/><path d="M1306.600 106.300 H1317.800 M1310.600 102.300 L1306.600 106.300 L1310.600 110.300" fill="none" stroke="#1e8bcd" stroke-width="1.200"/><rect x="1347.300" y="84.400" width="18.400" height="18.100" fill="#eae9e8" stroke="#a6a4a2" stroke-width="1"/><rect x="1354.500" y="91.500" width="18.200" height="18" fill="#eae9e8" fill-opacity="0.6" stroke="#a6a4a2" stroke-width="1"/><path d="M1365.700 91.500 V102.500 H1354.500" fill="none" stroke="#a6a4a2" stroke-width="1"/><rect x="1345.5" y="82.6" width="4" height="4" fill="#f3f2f1"/><rect x="1346" y="83.1" width="3" height="3" fill="#a6a4a2"/><rect x="1345.5" y="107.5" width="4" height="4" fill="#f3f2f1"/><rect x="1346" y="108" width="3" height="3" fill="#a6a4a2"/><rect x="1370.5" y="82.6" width="4" height="4" fill="#f3f2f1"/><rect x="1371" y="83.1" width="3" height="3" fill="#a6a4a2"/><rect x="1370.5" y="107.5" width="4" height="4" fill="#f3f2f1"/><rect x="1371" y="108" width="3" height="3" fill="#a6a4a2"/><path d="M1387 105.500 H1403.500 V94.600 Z" fill="#eae9e8" stroke="#a6a4a2" stroke-width="1"/><path d="M1405.400 88.800 V105.500 H1416.500 Z" fill="#d4d3d2" stroke="#a6a4a2" stroke-width="1"/><path d="M1392.600 98.600 C1387 97 1386.500 87.300 1393.500 87.300 H1402.500" fill="none" stroke="#a6a4a2" stroke-width="1"/><path d="M1397.300 82.200 L1402.800 87.300 L1397.300 92.700" fill="none" stroke="#a6a4a2" stroke-width="1"/></svg>
<div class="a" style="left:326px;top:182px;width:102px;height:26px;background:#fff;border:1px solid #d0d0d0"></div>
<div class="t" style="left:332.8px;top:189.9px;font-size:12.20px;color:#444;transform-origin:0 50%;transform:scaleX(1.112);">A5</div>
<svg style="left:414px;top:192px" width="8" height="5"><path d="M0 0h7.400l-3.700 4.200z" fill="#5a5a5a"/></svg>
<div class="a" style="left:442px;top:190px;width:2px;height:2px;background:#a6a6a6"></div><div class="a" style="left:442px;top:194px;width:2px;height:2px;background:#a6a6a6"></div><div class="a" style="left:442px;top:198px;width:2px;height:2px;background:#a6a6a6"></div>
<div class="a" style="left:458px;top:182px;width:110px;height:26px;background:#fff;border:1px solid #d0d0d0"></div>
<svg style="left:471px;top:189px" width="12" height="12"><path d="M1.500 1.500 L10.500 10.500 M10.500 1.500 L1.500 10.500" stroke="#a6a6a6" stroke-width="1.700"/></svg>
<svg style="left:506px;top:189px" width="14" height="12"><path d="M1.500 6.500 L5 10 L12.500 1.500" fill="none" stroke="#a6a6a6" stroke-width="1.900"/></svg>
<div class="t" style="left:543.500px;top:186.500px;font-size:15.500px;color:#444;font-style:italic;font-weight:bold;font-family:'Liberation Serif',serif;letter-spacing:-0.5px">f<span style="font-size:11.500px">x</span></div>
<div class="a" style="left:571px;top:182px;width:960px;height:26px;background:#fff;border:1px solid #d0d0d0"></div>
<div class="a" style="left:321px;top:218px;width:25px;height:394px;background:#e6e6e6"></div>
<div class="a" style="left:346px;top:218px;width:1176px;height:18px;background:#d2d2d2"></div>
<div class="a" style="left:346px;top:236px;width:1176px;height:2px;background:#217346"></div>
<svg style="left:331px;top:222px" width="13" height="13"><path d="M12 0 V12 H0 Z" fill="#b4b4b4"/></svg>
<div class="a" style="left:346px;top:218px;width:1px;height:18px;background:#b2b2b2"></div>
<div class="t hd" style="left:347px;top:222px;width:117px">A</div>
<div class="a" style="left:464px;top:218px;width:1px;height:18px;background:#b2b2b2"></div>
<div class="t hd" style="left:465px;top:222px;width:117px">B</div>
<div class="a" style="left:582px;top:218px;width:1px;height:18px;background:#b2b2b2"></div>
<div class="t hd" style="left:583px;top:222px;width:99px">C</div>
<div class="a" style="left:682px;top:218px;width:1px;height:18px;background:#b2b2b2"></div>
<div class="t hd" style="left:683px;top:222px;width:104px">D</div>
<div class="a" style="left:787px;top:218px;width:1px;height:18px;background:#b2b2b2"></div>
<div class="t hd" style="left:788px;top:222px;width:147px">E</div>
<div class="a" style="left:935px;top:218px;width:1px;height:18px;background:#b2b2b2"></div>
<div class="t hd" style="left:936px;top:222px;width:63px">F</div>
<div class="a" style="left:999px;top:218px;width:1px;height:18px;background:#b2b2b2"></div>
<div class="t hd" style="left:1000px;top:222px;width:63px">G</div>
<div class="a" style="left:1063px;top:218px;width:1px;height:18px;background:#b2b2b2"></div>
<div class="t hd" style="left:1064px;top:222px;width:63px">H</div>
<div class="a" style="left:1127px;top:218px;width:1px;height:18px;background:#b2b2b2"></div>
<div class="t hd" style="left:1128px;top:222px;width:63px">I</div>
<div class="a" style="left:1191px;top:218px;width:1px;height:18px;background:#b2b2b2"></div>
<div class="t hd" style="left:1192px;top:222px;width:63px">J</div>
<div class="a" style="left:1255px;top:218px;width:1px;height:18px;background:#b2b2b2"></div>
<div class="t hd" style="left:1256px;top:222px;width:63px">K</div>
<div class="a" style="left:1319px;top:218px;width:1px;height:18px;background:#b2b2b2"></div>
<div class="t hd" style="left:1320px;top:222px;width:63px">L</div>
<div class="a" style="left:1383px;top:218px;width:1px;height:18px;background:#b2b2b2"></div>
<div class="t hd" style="left:1384px;top:222px;width:63px">M</div>
<div class="a" style="left:1447px;top:218px;width:1px;height:18px;background:#b2b2b2"></div>
<div class="t hd" style="left:1448px;top:222px;width:63px">N</div>
<div class="a" style="left:1511px;top:218px;width:1px;height:18px;background:#b2b2b2"></div>
<div class="t hd" style="left:1512px;top:222px;width:63px">O</div>
<div class="a" style="left:346px;top:257px;width:1176px;height:1px;background:#d4d4d4"></div>
<div class="a" style="left:321px;top:257px;width:25px;height:1px;background:#b0b0b0"></div>
<div class="t rn" style="left:322.500px;top:243px">1</div>
<div class="a" style="left:346px;top:277px;width:1176px;height:1px;background:#d4d4d4"></div>
<div class="a" style="left:321px;top:277px;width:25px;height:1px;background:#b0b0b0"></div>
<div class="t rn" style="left:322.500px;top:263px">2</div>
<div class="a" style="left:346px;top:297px;width:1176px;height:1px;background:#d4d4d4"></div>
<div class="a" style="left:321px;top:297px;width:25px;height:1px;background:#b0b0b0"></div>
<div class="t rn" style="left:322.500px;top:283px">3</div>
<div class="a" style="left:346px;top:317px;width:1176px;height:1px;background:#d4d4d4"></div>
<div class="a" style="left:321px;top:317px;width:25px;height:1px;background:#b0b0b0"></div>
<div class="t rn" style="left:322.500px;top:303px">4</div>
<div class="a" style="left:346px;top:337px;width:1176px;height:1px;background:#d4d4d4"></div>
<div class="a" style="left:321px;top:337px;width:25px;height:1px;background:#b0b0b0"></div>
<div class="a" style="left:321px;top:318px;width:24px;height:19px;background:#d3f0e0"></div>
<div class="t rn" style="left:322.500px;top:323px;color:#217346">5</div>
<div class="a" style="left:346px;top:357px;width:1176px;height:1px;background:#d4d4d4"></div>
<div class="a" style="left:321px;top:357px;width:25px;height:1px;background:#b0b0b0"></div>
<div class="t rn" style="left:322.500px;top:343px">6</div>
<div class="a" style="left:346px;top:377px;width:1176px;height:1px;background:#d4d4d4"></div>
<div class="a" style="left:321px;top:377px;width:25px;height:1px;background:#b0b0b0"></div>
<div class="t rn" style="left:322.500px;top:363px">7</div>
<div class="a" style="left:346px;top:397px;width:1176px;height:1px;background:#d4d4d4"></div>
<div class="a" style="left:321px;top:397px;width:25px;height:1px;background:#b0b0b0"></div>
<div class="t rn" style="left:322.500px;top:383px">8</div>
<div class="a" style="left:346px;top:417px;width:1176px;height:1px;background:#d4d4d4"></div>
<div class="a" style="left:321px;top:417px;width:25px;height:1px;background:#b0b0b0"></div>
<div class="t rn" style="left:322.500px;top:403px">9</div>
<div class="a" style="left:346px;top:437px;width:1176px;height:1px;background:#d4d4d4"></div>
<div class="a" style="left:321px;top:437px;width:25px;height:1px;background:#b0b0b0"></div>
<div class="t rn" style="left:322.500px;top:423px">10</div>
<div class="a" style="left:346px;top:457px;width:1176px;height:1px;background:#d4d4d4"></div>
<div class="a" style="left:321px;top:457px;width:25px;height:1px;background:#b0b0b0"></div>
<div class="t rn" style="left:322.500px;top:443px">11</div>
<div class="a" style="left:346px;top:477px;width:1176px;height:1px;background:#d4d4d4"></div>
<div class="a" style="left:321px;top:477px;width:25px;height:1px;background:#b0b0b0"></div>
<div class="t rn" style="left:322.500px;top:463px">12</div>
<div class="a" style="left:346px;top:497px;width:1176px;height:1px;background:#d4d4d4"></div>
<div class="a" style="left:321px;top:497px;width:25px;height:1px;background:#b0b0b0"></div>
<div class="t rn" style="left:322.500px;top:483px">13</div>
<div class="a" style="left:346px;top:517px;width:1176px;height:1px;background:#d4d4d4"></div>
<div class="a" style="left:321px;top:517px;width:25px;height:1px;background:#b0b0b0"></div>
<div class="t rn" style="left:322.500px;top:503px">14</div>
<div class="a" style="left:346px;top:537px;width:1176px;height:1px;background:#d4d4d4"></div>
<div class="a" style="left:321px;top:537px;width:25px;height:1px;background:#b0b0b0"></div>
<div class="t rn" style="left:322.500px;top:523px">15</div>
<div class="a" style="left:346px;top:557px;width:1176px;height:1px;background:#d4d4d4"></div>
<div class="a" style="left:321px;top:557px;width:25px;height:1px;background:#b0b0b0"></div>
<div class="t rn" style="left:322.500px;top:543px">16</div>
<div class="a" style="left:346px;top:577px;width:1176px;height:1px;background:#d4d4d4"></div>
<div class="a" style="left:321px;top:577px;width:25px;height:1px;background:#b0b0b0"></div>
<div class="t rn" style="left:322.500px;top:563px">17</div>
<div class="a" style="left:346px;top:597px;width:1176px;height:1px;background:#d4d4d4"></div>
<div class="a" style="left:321px;top:597px;width:25px;height:1px;background:#b0b0b0"></div>
<div class="t rn" style="left:322.500px;top:583px">18</div>
<div class="a" style="left:346px;top:617px;width:1176px;height:1px;background:#d4d4d4"></div>
<div class="a" style="left:321px;top:617px;width:25px;height:1px;background:#b0b0b0"></div>
<div class="t rn" style="left:322.500px;top:603px">19</div>
<div class="a" style="left:346px;top:238px;width:1px;height:374px;background:#ababab"></div>
<div class="a" style="left:464px;top:238px;width:1px;height:374px;background:#d4d4d4"></div>
<div class="a" style="left:582px;top:238px;width:1px;height:374px;background:#d4d4d4"></div>
<div class="a" style="left:682px;top:238px;width:1px;height:374px;background:#d4d4d4"></div>
<div class="a" style="left:787px;top:238px;width:1px;height:374px;background:#d4d4d4"></div>
<div class="a" style="left:935px;top:238px;width:1px;height:374px;background:#d4d4d4"></div>
<div class="a" style="left:999px;top:238px;width:1px;height:374px;background:#d4d4d4"></div>
<div class="a" style="left:1063px;top:238px;width:1px;height:374px;background:#d4d4d4"></div>
<div class="a" style="left:1127px;top:238px;width:1px;height:374px;background:#d4d4d4"></div>
<div class="a" style="left:1191px;top:238px;width:1px;height:374px;background:#d4d4d4"></div>
<div class="a" style="left:1255px;top:238px;width:1px;height:374px;background:#d4d4d4"></div>
<div class="a" style="left:1319px;top:238px;width:1px;height:374px;background:#d4d4d4"></div>
<div class="a" style="left:1383px;top:238px;width:1px;height:374px;background:#d4d4d4"></div>
<div class="a" style="left:1447px;top:238px;width:1px;height:374px;background:#d4d4d4"></div>
<div class="a" style="left:1511px;top:238px;width:1px;height:374px;background:#d4d4d4"></div>
<div class="a" style="left:1575px;top:238px;width:1px;height:374px;background:#d4d4d4"></div>
<div class="a" style="left:787px;top:458px;width:1px;height:39px;background:#fff"></div>
<div class="a" style="left:935px;top:238px;width:1px;height:374px;background:#fff"></div><div class="a" style="left:935px;top:238px;width:1px;height:374px;background:linear-gradient(180deg,#868686 62.5%,transparent 62.5%) 0 5px/1px 8px repeat-y"></div>
<div class="a" style="left:1511px;top:238px;width:1px;height:374px;background:#fff"></div><div class="a" style="left:1511px;top:238px;width:1px;height:374px;background:linear-gradient(180deg,#868686 62.5%,transparent 62.5%) 0 5px/1px 8px repeat-y"></div>
<div class="a" style="left:346px;top:417px;width:1176px;height:1px;background:#8c8c8c"></div>
<div class="t" style="left:348.6px;top:261.6px;font-size:13.00px;color:#000;transform-origin:0 50%;transform:scaleX(1.064);-webkit-text-stroke:0.12px #000;">Table 1</div>
<div class="t" style="left:466.8px;top:261.6px;font-size:13.00px;color:#000;transform-origin:0 50%;transform:scaleX(1.052);-webkit-text-stroke:0.12px #000;">Dim1</div>
<div class="t" style="left:584.7px;top:261.6px;font-size:13.00px;color:#000;transform-origin:0 50%;transform:scaleX(1.078);-webkit-text-stroke:0.12px #000;">Dim2</div>
<div class="t" style="left:684.4px;top:261.6px;font-size:13.00px;color:#000;transform-origin:0 50%;transform:scaleX(1.052);-webkit-text-stroke:0.12px #000;">Dim3</div>
<div class="t" style="left:788.9px;top:261.6px;font-size:13.00px;color:#000;transform-origin:0 50%;transform:scaleX(1.041);-webkit-text-stroke:0.12px #000;">Sum(Expression1)</div>
<div class="t" style="left:348.6px;top:361.6px;font-size:13.00px;color:#000;transform-origin:0 50%;transform:scaleX(1.064);-webkit-text-stroke:0.12px #000;">Table 2</div>
<div class="t" style="left:466.8px;top:361.6px;font-size:13.00px;color:#000;transform-origin:0 50%;transform:scaleX(1.052);-webkit-text-stroke:0.12px #000;">Dim1</div>
<div class="t" style="left:584.7px;top:361.6px;font-size:13.00px;color:#000;transform-origin:0 50%;transform:scaleX(1.078);-webkit-text-stroke:0.12px #000;">Dim2</div>
<div class="t" style="left:684.4px;top:361.6px;font-size:13.00px;color:#000;transform-origin:0 50%;transform:scaleX(1.052);-webkit-text-stroke:0.12px #000;">Dim3</div>
<div class="t" style="left:788.9px;top:361.6px;font-size:13.00px;color:#000;transform-origin:0 50%;transform:scaleX(1.041);-webkit-text-stroke:0.12px #000;">Sum(Expression1)</div>
<div class="t" style="left:348.6px;top:461.6px;font-size:13.00px;color:#000;transform-origin:0 50%;transform:scaleX(1.064);-webkit-text-stroke:0.12px #000;">Table 3</div>
<div class="t" style="left:466.8px;top:461.6px;font-size:13.00px;color:#000;transform-origin:0 50%;transform:scaleX(1.052);-webkit-text-stroke:0.12px #000;">Dim1</div>
<div class="t" style="left:584.7px;top:461.6px;font-size:13.00px;color:#000;transform-origin:0 50%;transform:scaleX(1.078);-webkit-text-stroke:0.12px #000;">Dim2</div>
<div class="t" style="left:684.4px;top:461.6px;font-size:13.00px;color:#000;transform-origin:0 50%;transform:scaleX(1.041);-webkit-text-stroke:0.12px #000;">Sum(Expression1)</div>
<div class="t" style="left:466.8px;top:281.6px;font-size:13.00px;color:#000;transform-origin:0 50%;transform:scaleX(1.009);-webkit-text-stroke:0.12px #000;">&lt;Dim1_3&gt;</div>
<div class="t" style="left:584.7px;top:281.6px;font-size:13.00px;color:#000;transform-origin:0 50%;transform:scaleX(1.010);-webkit-text-stroke:0.12px #000;">&lt;Dim2_2&gt;</div>
<div class="t" style="left:684.4px;top:281.6px;font-size:13.00px;color:#000;transform-origin:0 50%;transform:scaleX(1.019);-webkit-text-stroke:0.12px #000;">&lt;Dim3_1&gt;</div>
<div class="t" style="left:788.9px;top:281.6px;font-size:13.00px;color:#000;transform-origin:0 50%;transform:scaleX(1.032);-webkit-text-stroke:0.12px #000;">&lt;Sum(Expression1)_3&gt;</div>
<div class="t" style="left:466.8px;top:381.6px;font-size:13.00px;color:#000;transform-origin:0 50%;transform:scaleX(1.009);-webkit-text-stroke:0.12px #000;">&lt;Dim1_2&gt;</div>
<div class="t" style="left:584.7px;top:381.6px;font-size:13.00px;color:#000;transform-origin:0 50%;transform:scaleX(1.010);-webkit-text-stroke:0.12px #000;">&lt;Dim2_1&gt;</div>
<div class="t" style="left:684.4px;top:381.6px;font-size:13.00px;color:#000;transform-origin:0 50%;transform:scaleX(1.024);-webkit-text-stroke:0.12px #000;">&lt;Dim3&gt;</div>
<div class="t" style="left:788.9px;top:381.6px;font-size:13.00px;color:#000;transform-origin:0 50%;transform:scaleX(1.032);-webkit-text-stroke:0.12px #000;">&lt;Sum(Expression1)_2&gt;</div>
<div class="t" style="left:466.8px;top:481.6px;font-size:13.00px;color:#000;transform-origin:0 50%;transform:scaleX(1.009);-webkit-text-stroke:0.12px #000;">&lt;Dim1_1&gt;</div>
<div class="t" style="left:584.7px;top:481.6px;font-size:13.00px;color:#000;transform-origin:0 50%;transform:scaleX(1.024);-webkit-text-stroke:0.12px #000;">&lt;Dim2&gt;</div>
<div class="t" style="left:684.4px;top:481.6px;font-size:13.00px;color:#000;transform-origin:0 50%;transform:scaleX(1.032);-webkit-text-stroke:0.12px #000;">&lt;Sum(Expression1)_1&gt;</div>
<div class="a" style="left:465px;top:319px;width:1057px;height:17px;background:#c6c6c6"></div>
<div class="a" style="left:582px;top:319px;width:1px;height:17px;background:#a6a6a6"></div>
<div class="a" style="left:682px;top:319px;width:1px;height:17px;background:#a6a6a6"></div>
<div class="a" style="left:787px;top:319px;width:1px;height:17px;background:#a6a6a6"></div>
<div class="a" style="left:935px;top:319px;width:1px;height:17px;background:#a6a6a6"></div>
<div class="a" style="left:999px;top:319px;width:1px;height:17px;background:#a6a6a6"></div>
<div class="a" style="left:1063px;top:319px;width:1px;height:17px;background:#a6a6a6"></div>
<div class="a" style="left:1127px;top:319px;width:1px;height:17px;background:#a6a6a6"></div>
<div class="a" style="left:1191px;top:319px;width:1px;height:17px;background:#a6a6a6"></div>
<div class="a" style="left:1255px;top:319px;width:1px;height:17px;background:#a6a6a6"></div>
<div class="a" style="left:1319px;top:319px;width:1px;height:17px;background:#a6a6a6"></div>
<div class="a" style="left:1383px;top:319px;width:1px;height:17px;background:#a6a6a6"></div>
<div class="a" style="left:1447px;top:319px;width:1px;height:17px;background:#a6a6a6"></div>
<div class="a" style="left:1511px;top:319px;width:1px;height:17px;background:#a6a6a6"></div>
<div class="a" style="left:1575px;top:319px;width:1px;height:17px;background:#a6a6a6"></div>
<div class="a" style="left:347px;top:318px;width:1175px;height:1px;background:#fff"></div><div class="a" style="left:347px;top:336px;width:1175px;height:1px;background:#fff"></div>
<div class="a" style="left:345px;top:316px;width:1177px;height:2px;background:#217346"></div>
<div class="a" style="left:345px;top:337px;width:1177px;height:2px;background:#217346"></div>
<div class="a" style="left:345px;top:316px;width:2px;height:23px;background:#217346"></div>
<div class="a" style="left:345px;top:334px;width:8px;height:6px;background:#217346;border-top:1px solid #fff;border-right:2px solid #fff"></div>
<svg style="left:0;top:0" width="1522" height="612" viewBox="0 0 1522 612">
<defs><filter id="sh" x="-10%" y="-50%" width="120%" height="220%"><feGaussianBlur in="SourceAlpha" stdDeviation="1.8"/><feOffset dx="0.500" dy="2.500"/><feComponentTransfer><feFuncA type="linear" slope="0.6"/></feComponentTransfer><feMerge><feMergeNode/><feMergeNode in="SourceGraphic"/></feMerge></filter></defs>
<g filter="url(#sh)">
<path d="M356 326.500 L386 311.500 L386 321.500 L1274 326.500 A5 5 0 0 1 1274 336.500 L386 332.500 L386 341.500 Z" fill="#e8494a"/>
<circle cx="1310" cy="332" r="8.700" fill="#e8494a"/>
<path d="M691.200 117.600 L722.600 128.100 L716.600 133.500 L757.500 172.500 A5 5 0 0 1 750 180 L708.900 142.200 L702.400 148.700 Z" fill="#e8494a"/>
<circle cx="772" cy="182" r="9" fill="#e8494a"/>
</g>
<text transform="translate(1309.700 337.300) scale(0.25)" text-anchor="middle" font-family="Liberation Sans, sans-serif" font-size="62" fill="#fff">1</text>
<text transform="translate(772 187.300) scale(0.25)" text-anchor="middle" font-family="Liberation Sans, sans-serif" font-size="62" fill="#fff">2</text>
</svg></body></html>
